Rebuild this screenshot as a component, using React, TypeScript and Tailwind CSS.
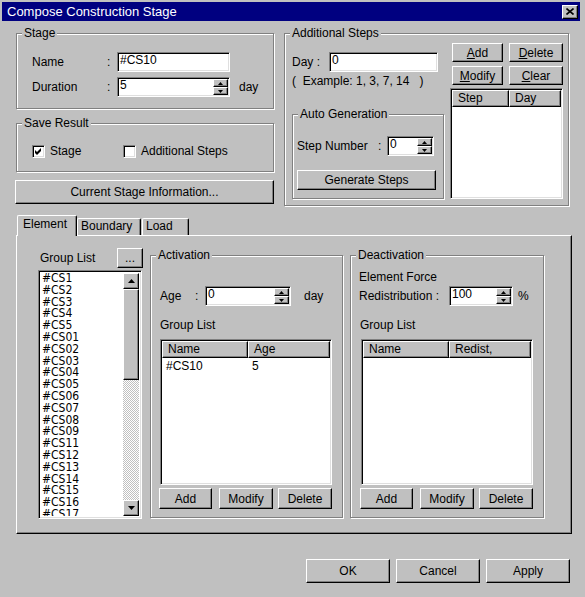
import type { ReactNode } from 'react';

// ─── Win9x bevels ─────────────────────────────────────────────────────────────

const raised =
  'bg-[#c0c0c0] border border-t-white border-l-white border-r-black border-b-black shadow-[inset_-1px_-1px_0_#808080]';
const sunken =
  'bg-white border border-t-[#808080] border-l-[#808080] border-r-white border-b-white shadow-[inset_1px_1px_0_#000,inset_-1px_-1px_0_#dfdfdf]';
const etched = 'border border-[#808080] shadow-[1px_1px_0_#fff,inset_1px_1px_0_#fff]';

const GROUPS = [
  '#CS1', '#CS2', '#CS3', '#CS4', '#CS5', '#CS01', '#CS02', '#CS03', '#CS04', '#CS05', '#CS06',
  '#CS07', '#CS08', '#CS09', '#CS11', '#CS12', '#CS13', '#CS14', '#CS15', '#CS16', '#CS17',
];

function Group({ label, className, children }: { label: string; className: string; children?: ReactNode }) {
  return (
    <div className={`relative ${etched} ${className}`}>
      <span className="absolute -top-[8px] left-[5px] bg-[#c0c0c0] px-[2px] leading-[14px]">{label}</span>
      {children}
    </div>
  );
}

function Button({ className, children }: { className: string; children: ReactNode }) {
  return (
    <button className={`${raised} flex items-center justify-center leading-[14px] ${className}`}>{children}</button>
  );
}

function Arrow({ up, size = 'sm' }: { up?: boolean; size?: 'sm' | 'lg' }) {
  const w = size === 'lg' ? 7 : 5;
  const h = size === 'lg' ? 4 : 3;
  return (
    <svg width={w} height={h} viewBox={`0 0 ${w} ${h}`}>
      <polygon points={up ? `0,${h} ${w},${h} ${w / 2},0` : `0,0 ${w},0 ${w / 2},${h}`} fill="#000" />
    </svg>
  );
}

function Field({ value, className, spin }: { value: string; className: string; spin?: boolean }) {
  return (
    <div className={`${sunken} flex h-[20px] ${className}`}>
      <span className="flex-1 pl-[2px] pt-px leading-[13px]">{value}</span>
      {spin && (
        <div className="flex flex-col my-px mr-px w-[15px]">
          <span className={`${raised} h-[8px] flex items-center justify-center`}>
            <Arrow up />
          </span>
          <span className={`${raised} h-[8px] flex items-center justify-center`}>
            <Arrow />
          </span>
        </div>
      )}
    </div>
  );
}

function Checkbox({ checked }: { checked?: boolean }) {
  return (
    <span className={`${sunken} w-[13px] h-[13px] flex items-center justify-center`}>
      {checked && (
        <svg width="7" height="7" viewBox="0 0 7 7">
          <path d="M0 2 L2 4 L6 0 L6 3 L2 7 L0 5 Z" fill="#000" />
        </svg>
      )}
    </span>
  );
}

function ListView({
  className,
  cols,
  rows = [],
}: {
  className: string;
  cols: { label: string; w: string }[];
  rows?: string[][];
}) {
  return (
    <div className={`${sunken} p-px ${className}`}>
      <div className="flex">
        {cols.map((c) => (
          <div key={c.label} className={`${raised} h-[17px] pl-[5px] leading-[14px] ${c.w}`}>
            {c.label}
          </div>
        ))}
      </div>
      {rows.map((r, i) => (
        <div key={i} className="flex leading-[14px] mt-px">
          {r.map((cell, j) => (
            <span key={j} className={`pl-[4px] ${cols[j].w}`}>
              {cell}
            </span>
          ))}
        </div>
      ))}
    </div>
  );
}

// ─── Dialog ───────────────────────────────────────────────────────────────────

export default function App() {
  return (
    <div className="w-[585px] h-[597px] bg-[#c0c0c0] pt-[2px] pl-[2px] overflow-hidden text-[12px] text-black font-['Liberation_Sans',Arial,sans-serif]">
      {/* Title bar */}
      <div className="w-[578px] h-[19px] bg-[#000080] flex items-center pl-[5px] text-white text-[13px]">
        <span>Compose Construction Stage</span>
        <span className={`${raised} ml-auto mr-[2px] w-[16px] h-[14px] flex items-center justify-center`}>
          <svg width="8" height="7" viewBox="0 0 8 7">
            <path d="M0.5 0.5 L7.5 6.5 M7.5 0.5 L0.5 6.5" stroke="#000" strokeWidth="1.6" />
          </svg>
        </span>
      </div>

      <div className="pl-[13px]">
        {/* Top section */}
        <div className="flex items-start mt-[12px]">
          <div className="flex flex-col w-[259px]">
            <Group label="Stage" className="ml-px w-[258px] h-[76px] pt-[18px] pl-[15px]">
              <div className="flex items-center h-[20px]">
                <span className="w-[75px]">Name</span>
                <span className="w-[10px]">:</span>
                <Field value="#CS10" className="w-[113px]" />
              </div>
              <div className="flex items-center h-[20px] mt-[5px]">
                <span className="w-[75px]">Duration</span>
                <span className="w-[10px]">:</span>
                <Field value="5" className="w-[113px]" spin />
                <span className="ml-[9px]">day</span>
              </div>
            </Group>

            <Group label="Save Result" className="ml-px mt-[14px] w-[258px] h-[49px] pt-[18px] pl-[15px]">
              <div className="flex items-center">
                <div className="flex items-center w-[91px]">
                  <Checkbox checked />
                  <span className="ml-[5px]">Stage</span>
                </div>
                <Checkbox />
                <span className="ml-[5px]">Additional Steps</span>
              </div>
            </Group>

            <Button className="mt-[8px] w-[259px] h-[24px]">Current Stage Information...</Button>
          </div>

          <Group label="Additional Steps" className="ml-[10px] w-[285px] h-[173px] flex pl-[7px]">
            <div className="flex flex-col w-[152px] pt-[18px]">
              <div className="flex items-center h-[20px]">
                <span className="w-[37px]">Day :</span>
                <Field value="0" className="w-[109px]" />
              </div>
              <span className="mt-[2px] leading-[14px] whitespace-pre">(  Example: 1, 3, 7, 14   )</span>
              <Group label="Auto Generation" className="mt-[26px] w-[152px] h-[85px] pt-[21px] pl-[4px]">
                <div className="flex items-center h-[20px]">
                  <span className="w-[81px]">Step Number</span>
                  <span className="w-[9px]">:</span>
                  <Field value="0" className="w-[47px]" spin />
                </div>
                <Button className="mt-[14px] w-[139px] h-[20px]">Generate Steps</Button>
              </Group>
            </div>

            <div className="flex flex-col ml-[6px] w-[113px] pt-[9px]">
              <div className="flex pl-[2px] gap-[6px]">
                <Button className="w-[51px] h-[19px]">
                  <u>A</u>dd
                </Button>
                <Button className="w-[54px] h-[19px]">
                  <u>D</u>elete
                </Button>
              </div>
              <div className="flex pl-[2px] gap-[6px] mt-[4px]">
                <Button className="w-[51px] h-[19px]">
                  <u>M</u>odify
                </Button>
                <Button className="w-[54px] h-[19px]">
                  <u>C</u>lear
                </Button>
              </div>
              <ListView
                className="mt-[3px] w-[113px] h-[111px]"
                cols={[
                  { label: 'Step', w: 'w-[57px]' },
                  { label: 'Day', w: 'w-[52px]' },
                ]}
              />
            </div>
          </Group>
        </div>

        {/* Tabs */}
        <div className="flex items-end mt-[9px] ml-[2px]">
          <div className="relative z-10 -mb-px w-[60px] h-[21px] bg-[#c0c0c0] border-t border-l border-white border-r border-r-black rounded-t-[2px] shadow-[inset_-1px_0_0_#808080] pl-[5px] pt-[1px] leading-[14px]">
            Element
          </div>
          <div className="w-[64px] h-[17px] border-t border-l border-white border-r border-r-black rounded-t-[2px] shadow-[inset_-1px_0_0_#808080] pl-[3px] leading-[14px]">
            Boundary
          </div>
          <div className="ml-px w-[47px] h-[17px] border-t border-l border-white border-r border-r-black rounded-t-[2px] shadow-[inset_-1px_0_0_#808080] pl-[3px] leading-[14px]">
            Load
          </div>
        </div>

        <div className={`ml-px w-[556px] h-[299px] ${raised} flex items-start pl-[21px]`}>
          {/* Group list */}
          <div className="flex flex-col mt-[12px] w-[105px]">
            <div className="flex items-center justify-between h-[20px]">
              <span className="ml-[2px]">Group List</span>
              <Button className="w-[26px] h-[20px]">...</Button>
            </div>
            <div className={`${sunken} mt-[2px] w-[104px] h-[249px] flex p-[2px]`}>
              <div className="flex-1 overflow-hidden pl-px text-[12px] leading-[11.8px] font-['Liberation_Sans_Narrow','DejaVu_Sans_Condensed','DejaVu_Sans',sans-serif] [font-stretch:condensed]">
                {GROUPS.map((g) => (
                  <div key={g}>{g}</div>
                ))}
              </div>
              <div className="w-[16px] flex flex-col">
                <span className={`${raised} h-[16px] flex items-center justify-center`}>
                  <Arrow up size="lg" />
                </span>
                <span className={`${raised} h-[91px]`} />
                <span className="flex-1 bg-[repeating-conic-gradient(#c0c0c0_0%_25%,#ffffff_0%_50%)] bg-[length:2px_2px]" />
                <span className={`${raised} h-[16px] flex items-center justify-center`}>
                  <Arrow size="lg" />
                </span>
              </div>
            </div>
          </div>

          {/* Activation */}
          <Group label="Activation" className="mt-[19px] ml-[7px] w-[193px] h-[263px] pt-[30px] pl-[9px]">
            <div className="flex items-center h-[20px]">
              <span className="w-[35px]">Age</span>
              <span className="w-[10px]">:</span>
              <Field value="0" className="w-[86px]" spin />
              <span className="ml-[13px]">day</span>
            </div>
            <div className="mt-[12px] leading-[14px]">Group List</div>
            <ListView
              className="mt-[7px] w-[172px] h-[146px]"
              cols={[
                { label: 'Name', w: 'w-[86px]' },
                { label: 'Age', w: 'w-[82px]' },
              ]}
              rows={[['#CS10', '5']]}
            />
            <div className="flex mt-[3px] -ml-px">
              <Button className="w-[53px] h-[21px]">Add</Button>
              <Button className="ml-[7px] w-[54px] h-[21px]">Modify</Button>
              <Button className="ml-[5px] w-[54px] h-[21px]">Delete</Button>
            </div>
          </Group>

          {/* Deactivation */}
          <Group label="Deactivation" className="mt-[19px] ml-[7px] w-[194px] h-[263px] pt-[14px] pl-[8px]">
            <div className="leading-[14px]">Element Force</div>
            <div className="flex items-center h-[20px] mt-[2px]">
              <span className="w-[90px]">Redistribution :</span>
              <Field value="100" className="w-[64px]" spin />
              <span className="ml-[5px]">%</span>
            </div>
            <div className="mt-[12px] ml-px leading-[14px]">Group List</div>
            <ListView
              className="mt-[7px] ml-[2px] w-[172px] h-[146px]"
              cols={[
                { label: 'Name', w: 'w-[86px]' },
                { label: 'Redist,', w: 'w-[82px]' },
              ]}
            />
            <div className="flex mt-[3px] ml-px">
              <Button className="w-[53px] h-[21px]">Add</Button>
              <Button className="ml-[7px] w-[54px] h-[21px]">Modify</Button>
              <Button className="ml-[5px] w-[54px] h-[21px]">Delete</Button>
            </div>
          </Group>
        </div>

        {/* Footer */}
        <div className="flex gap-[6px] mt-[25px] ml-[291px]">
          <Button className="w-[84px] h-[24px]">OK</Button>
          <Button className="w-[84px] h-[24px]">Cancel</Button>
          <Button className="w-[84px] h-[24px]">Apply</Button>
        </div>
      </div>
    </div>
  );
}
